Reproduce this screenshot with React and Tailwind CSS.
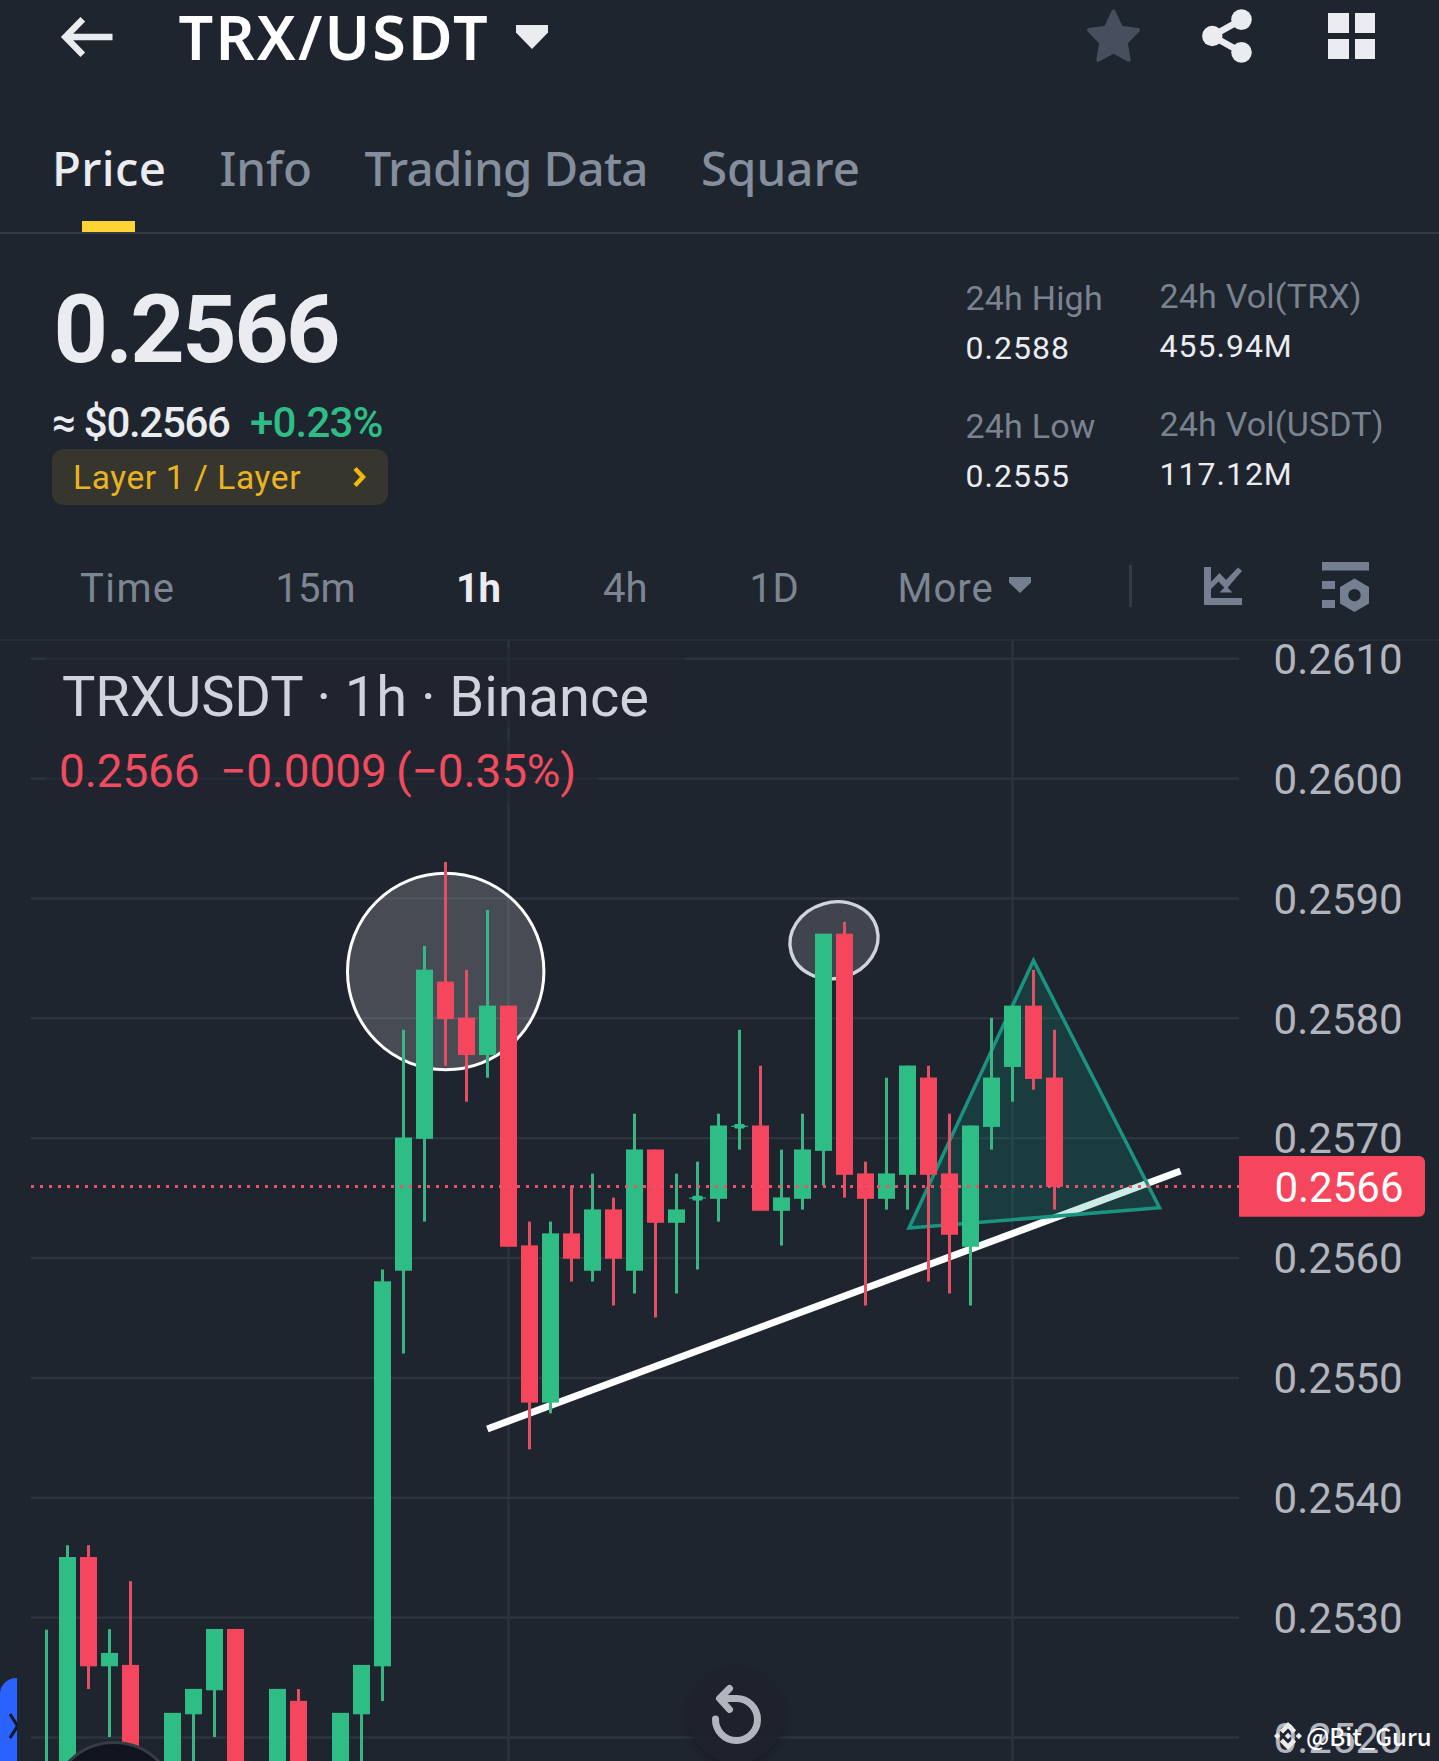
import React from 'react';

const STEP = 11.987;
const yOf = (tick) => 658.7 + (2610 - tick) * STEP;
const xOf = (index) => 46.5 + index * 21;

// [slot, body top, body bottom, high, low, rising], prices in 0.0001 ticks
const candles = [
  [0, 2516, 2510, 2529, 2510, true],
  [1, 2535, 2510, 2536, 2510, true],
  [2, 2535, 2526, 2536, 2524, false],
  [3, 2527, 2526, 2529, 2520, true],
  [4, 2526, 2510, 2533, 2510, false],
  [6, 2522, 2510, 2522, 2510, true],
  [7, 2524, 2522, 2524, 2510, true],
  [8, 2529, 2524, 2529, 2520, true],
  [9, 2529, 2510, 2529, 2510, false],
  [11, 2524, 2510, 2524, 2510, true],
  [12, 2523, 2510, 2524, 2510, false],
  [14, 2522, 2510, 2522, 2510, true],
  [15, 2526, 2522, 2526, 2510, true],
  [16, 2558, 2526, 2559, 2523, true],
  [17, 2570, 2559, 2579, 2552, true],
  [18, 2584, 2570, 2586, 2563, true],
  [19, 2583, 2580, 2593, 2576, false],
  [20, 2580, 2577, 2584, 2573, false],
  [21, 2581, 2577, 2589, 2575, true],
  [22, 2581, 2561, 2581, 2561, false],
  [23, 2561, 2548, 2563, 2544, false],
  [24, 2562, 2548, 2563, 2547, true],
  [25, 2562, 2560, 2566, 2558, false],
  [26, 2564, 2559, 2567, 2558, true],
  [27, 2564, 2560, 2565, 2556, false],
  [28, 2569, 2559, 2572, 2557, true],
  [29, 2569, 2563, 2569, 2555, false],
  [30, 2564, 2563, 2567, 2557, true],
  [31, 2565, 2565, 2568, 2559, true],
  [32, 2571, 2565, 2572, 2563, true],
  [33, 2571, 2571, 2579, 2569, true],
  [34, 2571, 2564, 2576, 2564, false],
  [35, 2565, 2564, 2569, 2561, true],
  [36, 2569, 2565, 2572, 2564, true],
  [37, 2587, 2569, 2587, 2566, true],
  [38, 2587, 2567, 2588, 2565, false],
  [39, 2567, 2565, 2568, 2556, false],
  [40, 2567, 2565, 2575, 2564, true],
  [41, 2576, 2567, 2576, 2564, true],
  [42, 2575, 2567, 2576, 2558, false],
  [43, 2567, 2562, 2572, 2557, false],
  [44, 2571, 2561, 2571, 2556, true],
  [45, 2575, 2571, 2580, 2569, true],
  [46, 2581, 2576, 2581, 2573, true],
  [47, 2581, 2575, 2584, 2574, false],
  [48, 2575, 2566, 2579, 2564, false],
];

const levels = [2610, 2600, 2590, 2580, 2570, 2560, 2550, 2540, 2530, 2520];

const Candle = ({ data }) => {
  const [slot, top, bottom, high, low, rising] = data;
  const x = xOf(slot);
  const body = rising ? '#2ebd85' : '#f6465d';
  const wick = rising ? '#3bb583' : '#e54f63';
  if (slot === 0) {
    return <rect x={x - 1.5} y={yOf(high)} width="3" height={yOf(low) - yOf(high)} fill={wick} />;
  }
  return (
    <g>
      <rect x={x - 1.5} y={yOf(high) - 0.5} width="3" height={yOf(low) - yOf(high)} fill={wick} />
      {top === bottom ? (
        <path d={`M${x - 8.5} ${yOf(top) - 0.5}h3l1 -1.8h9l1 1.8h3v1h-3l-1 1.8h-9l-1 -1.8h-3z`} fill={body} />
      ) : (
        <rect x={x - 8.5} y={yOf(top) - 0.7} width="17" height={yOf(bottom) - yOf(top) + 1.4} fill={body} />
      )}
    </g>
  );
};

const Header = () => (
  <header className="flex h-[73px] items-center text-[#eaecef]">
    <svg className="ml-[60px] h-[42px] w-[53px]" viewBox="0 0 53 42" fill="none" stroke="#eaecef" strokeWidth="6.6">
      <path d="M4 21H52.5M22.8 3.2L5.5 21l17.3 17.8" />
    </svg>
    <h1 className="ml-[65.5px] w-[337px] whitespace-nowrap font-['Noto_Sans',sans-serif] text-[61px] font-semibold leading-[73px] tracking-[2.2px] text-white">
      TRX/USDT
    </h1>
    <svg className="h-[24px] w-[32px]" viewBox="0 0 32 24" fill="#eaecef">
      <path d="M0 0h32v7.5L16 24 0 7.5z" />
    </svg>
    <svg className="mb-[2px] ml-[539px] h-[54px] w-[53px]" viewBox="0 0 53 54" fill="#474f5e" stroke="#474f5e" strokeWidth="4" strokeLinejoin="round">
      <path d="M26.5 2.5l7.4 16.2 17 2.3-12.2 12.6 3 17.2-15.2-8.3-15.2 8.3 3-17.2L2.1 21l17-2.3z" />
    </svg>
    <svg className="mb-[2px] ml-[62px] h-[54px] w-[50px]" viewBox="0 0 50 54" fill="#eaecef" stroke="#eaecef">
      <g stroke="none">
        <circle cx="10.3" cy="27" r="10.2" />
        <circle cx="39.5" cy="10.6" r="10.3" />
        <circle cx="39.5" cy="43.4" r="10.3" />
      </g>
      <path d="M39.5 10.6L10.3 27l29.2 16.4" fill="none" strokeWidth="6.5" />
    </svg>
    <div className="mb-[1px] ml-[76.5px] grid grid-cols-2 gap-[6px]">
      <span className="h-[20px] w-[20.5px] bg-[#eaecef]" />
      <span className="h-[20px] w-[20.5px] bg-[#eaecef]" />
      <span className="h-[20px] w-[20.5px] bg-[#eaecef]" />
      <span className="h-[20px] w-[20.5px] bg-[#eaecef]" />
    </div>
  </header>
);

const Tabs = () => (
  <nav className="flex h-[161px] border-b-2 border-[#323a45] pl-[52px] pt-[67px] font-['Noto_Sans',sans-serif] text-[47.5px] font-medium leading-[56px] text-[#848e9c]">
    <div className="w-[167.5px] whitespace-nowrap tracking-[0.4px] text-[#eaecef]">
      Price
      <div className="ml-[30px] mt-[25px] h-[11px] w-[52.5px] bg-[#fcd535]" />
    </div>
    <div className="w-[145px] whitespace-nowrap">Info</div>
    <div className="w-[336.5px] whitespace-nowrap tracking-[-0.7px]">Trading Data</div>
    <div className="whitespace-nowrap">Square</div>
  </nav>
);

const Stat = ({ label, value }) => (
  <div className="h-[128px] whitespace-nowrap">
    <div className="text-[34px] leading-[40px] tracking-[0.2px] text-[#7b8391]">{label}</div>
    <div className="mt-[10px] text-[32px] font-[450] leading-[40px] tracking-[1px] text-[#eaecef]">{value}</div>
  </div>
);

const Summary = () => (
  <section className="flex h-[304px] pl-[52px]">
    <div className="w-[913.5px] pt-[47.5px]">
      <div className="ml-[1.5px] text-[95px] font-bold leading-[96px] tracking-[-2.6px] text-[#eaecef]">0.2566</div>
      <div className="mt-[21px] flex whitespace-nowrap text-[42px] font-medium leading-[48px]">
        <span className="w-[198px] tracking-[-1.3px] text-[#eaecef]">≈ $0.2566</span>
        <span className="tracking-[-0.8px] text-[#2ebd85]">+0.23%</span>
      </div>
      <button className="mt-[2.5px] flex h-[56px] w-[336px] items-center rounded-xl bg-[#37362e] pl-[21px] pt-[2px] text-[33.5px] tracking-[0.6px] text-[#e9b422]">
        <span className="w-[280px] whitespace-nowrap pt-[1px] text-left">Layer 1 / Layer</span>
        <svg className="mb-[2px] h-[20px] w-[13px]" viewBox="0 0 13 20" fill="none" stroke="#f0b90b" strokeWidth="4.4">
          <path d="M2 1.5L10 10l-8 8.5" />
        </svg>
      </button>
    </div>
    <div className="w-[194px] pt-[43.5px]">
      <Stat label="24h High" value="0.2588" />
      <Stat label="24h Low" value="0.2555" />
    </div>
    <div className="pt-[41.5px]">
      <Stat label="24h Vol(TRX)" value="455.94M" />
      <Stat label="24h Vol(USDT)" value="117.12M" />
    </div>
  </section>
);

const Intervals = () => (
  <section className="flex h-[103px] items-center whitespace-nowrap border-b-2 border-[#272e38] pl-[80px] text-[40px] text-[#7d8593]">
    <span className="w-[195.5px] pt-[1px] tracking-[1.4px]">Time</span>
    <span className="w-[180.5px] pt-[1px]">15m</span>
    <span className="w-[147px] pt-[1px] font-bold tracking-[-0.5px] text-[#eaecef]">1h</span>
    <span className="w-[146.5px] pt-[1px]">4h</span>
    <span className="w-[148px] pt-[1px] tracking-[0.6px]">1D</span>
    <span className="w-[111.5px] pt-[1px] tracking-[1px]">More</span>
    <svg className="mb-[7px] h-[16px] w-[22px]" viewBox="0 0 22 16" fill="#767f91">
      <path d="M0 0h22v5.5L11 16 0 5.5z" />
    </svg>
    <span className="mb-[5px] ml-[98px] h-[42px] w-[3px] bg-[#323a45]" />
    <svg className="mb-[5px] ml-[72px] h-[38px] w-[38px]" viewBox="0 0 38 38" fill="#767f91">
      <path d="M0 0h7v31h31v7H0z" />
      <path d="M5 17L15.5 6l6.5 7L34 0.5l4 3.5-16 18.5-7.5-8L6 23z" />
      <path d="M22 19l6.5 6.5h-13z" />
    </svg>
    <svg className="mb-[3px] ml-[80px] h-[50px] w-[47px]" viewBox="0 0 47 50" fill="#767f91">
      <path d="M0 0h47v8.5H0zM0 19h13v8H0zM0 38h13v8H0z" />
      <path fillRule="evenodd" d="M32.5 16.5L47 25v16.5L32.5 50 18 41.5V25zM32.5 27a6.2 6.2 0 1 0 0 12.4a6.2 6.2 0 1 0 0-12.4z" />
    </svg>
  </section>
);

const Chart = () => (
  <svg className="block h-[1120px] w-[1439px] font-['Roboto',sans-serif]" viewBox="0 641 1439 1120">
    {levels.map((tick) => (
      <rect key={tick} x="31" y={yOf(tick) - 1.2} width="1208" height="2.4" fill="#2d343e" />
    ))}
    <rect x="507.3" y="641" width="2.4" height="1120" fill="#2d343e" />
    <rect x="1011.3" y="641" width="2.4" height="1120" fill="#2d343e" />
    <rect x="45" y="648" width="640" height="80" fill="#1f252f" opacity="0.55" />
    <rect x="45" y="739" width="552" height="64" fill="#1f252f" opacity="0.55" />

    <path d="M487.3 1429L1180.5 1171" stroke="#fff" strokeWidth="7" />
    <circle cx="445.7" cy="971.5" r="98.2" fill="#fff" fillOpacity="0.18" stroke="#fff" strokeWidth="3" />
    <ellipse cx="834" cy="940.3" rx="44.5" ry="38" transform="rotate(-16 834 940.3)" fill="#d1d4dc" fillOpacity="0.18" stroke="#d1d4dc" strokeWidth="3.4" />
    <path d="M1033.5 960.5L1159.5 1207.8 909 1228z" fill="#089981" fillOpacity="0.2" stroke="#1a9480" strokeWidth="3.5" />

    {candles.map((c) => <Candle key={c[0]} data={c} />)}
    <path d="M31 1186.5H1239" stroke="#ea5267" strokeWidth="3" strokeDasharray="3 6" />

    {levels.map((tick) => (
      <text key={tick} x="1273.6" y={yOf(tick) + 15.2} fontSize="42" fill="#b2b5be">
        {`0.${tick}`}
      </text>
    ))}
    <path d="M1239 1156h180a6 6 0 0 1 6 6v48.7a6 6 0 0 1-6 6h-180z" fill="#f6465d" />
    <text x="1274.4" y="1202" fontSize="42" fill="#fff">0.2566</text>
  </svg>
);

const App = () => {
  return (
    <div className="relative h-[1761px] w-[1439px] overflow-hidden bg-[#1f252f] font-['Roboto',sans-serif]">
      <Header />
      <Tabs />
      <Summary />
      <Intervals />
      <div className="relative">
        <Chart />

        <div className="absolute left-[62px] top-[24px] whitespace-nowrap">
          <div className="text-[56px] leading-[64px] tracking-[-0.05px] text-[#d1d4dc]">TRXUSDT · 1h · Binance</div>
          <div className="-ml-[3px] mt-[14px] flex text-[46px] leading-[56px] tracking-[-0.15px] text-[#f04b5f]">
            <span className="w-[161px]">0.2566</span>
            <span className="w-[176px]">−0.0009</span>
            <span>(−0.35%)</span>
          </div>
        </div>

        <div className="absolute left-0 top-[1037px] h-[83px] w-[17px] overflow-hidden rounded-tl-[16px] bg-[#2962ff]">
          <svg className="absolute left-[9px] top-[34px]" width="10" height="28" viewBox="0 0 10 28" fill="none" stroke="#131722" strokeWidth="3">
            <path d="M1 2l7.5 12L1 26" />
          </svg>
        </div>
        <div className="absolute left-[50px] top-[1100px] size-[128px] rounded-full border-[3px] border-[#363b46] bg-[#10141f]" />

        <button className="absolute left-[688px] top-[1026px] flex size-[96px] items-center justify-center rounded-full bg-[#1e222d]/90 shadow-[0_4px_7px_rgba(0,0,0,0.25)]">
          <svg className="mb-[2px] size-[64px]" viewBox="0 0 64 64" fill="none" stroke="#b2b5be" strokeWidth="7" strokeLinecap="round" strokeLinejoin="round">
            <path d="M11.500 37a21 21 0 1 0 21-20.500H17" />
            <path d="M25.500 6.500L15.500 16.500l10 11" />
          </svg>
        </button>

        <div className="absolute left-[1274px] top-[1077px] flex items-center whitespace-nowrap font-['Noto_Sans_CJK_SC',sans-serif] text-[24px] font-medium leading-[36px] text-white">
          <svg className="mr-[4px] size-[28px]" viewBox="0 0 28 28" fill="#ebebeb">
            <path d="M14 0l8.200 8.200-3.200 3.200-5-5-5 5-3.200-3.200zM14 28l-8.200-8.200L9 16.600l5 5 5-5 3.200 3.200z" />
            <path d="M14 10.800l3.200 3.200-3.200 3.200-3.200-3.200zM3.200 10.800L6.400 14l-3.200 3.200L0 14zM24.800 10.800L28 14l-3.200 3.200-3.200-3.200z" />
          </svg>
          @Bit_Guru
        </div>
      </div>
    </div>
  );
};

export default App;
